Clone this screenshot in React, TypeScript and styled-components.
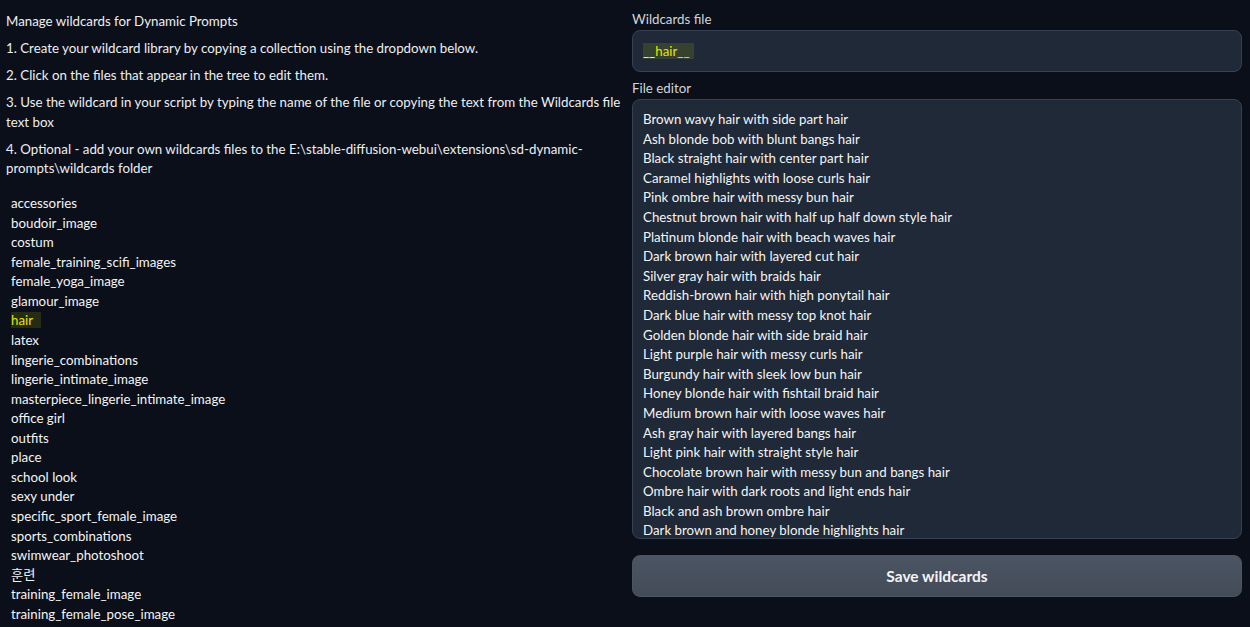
import React from "react";
import styled, { createGlobalStyle } from "styled-components";

const Global = createGlobalStyle`
  html, body { margin: 0; padding: 0; background: #0b0f19; }
  body { font-family: "Lato", "Noto Sans CJK KR", sans-serif; color: #e5e7eb; }
  * { box-sizing: border-box; }
`;

const Page = styled.div`
  display: flex;
  gap: 8px;
  padding: 0 8px 0 6px;
  height: 627px;
  overflow: hidden;
`;

const LeftCol = styled.div`
  flex: 0 0 618px;
  display: flex;
  flex-direction: column;
`;

const RightCol = styled.div`
  flex: 1;
  display: flex;
  flex-direction: column;
  padding-top: 10px;
`;

const Instructions = styled.div`
  padding-top: 12px;
  font-size: 13.3px;
  line-height: 19.5px;
  color: #eceef2;
`;

const Para = styled.p`
  margin: 0 0 7.5px 0;
`;

const Tree = styled.ul`
  list-style: none;
  margin: 8px 0 0 0;
  padding: 0 0 0 5px;
  font-size: 13.3px;
  line-height: 19.57px;
`;

const TreeItem = styled.li`
  color: #f3f4f6;
`;

const Mark = styled.span`
  background: rgba(220, 230, 0, 0.13);
  color: #e3e600;
  padding: 0 8px 0 0;
`;

const Label = styled.div`
  font-size: 13.3px;
  line-height: 18px;
  color: #d1d5db;
  margin-bottom: 2px;
`;

const InputBox = styled.div`
  height: 42px;
  background: #1f2937;
  border: 1px solid #374151;
  border-radius: 8px;
  padding: 0 10px;
  display: flex;
  align-items: center;
  font-size: 13.3px;
  color: #f3f4f6;
  margin-bottom: 7px;
`;

const FileMark = styled.span`
  background: rgba(220, 230, 0, 0.13);
  color: #e3e600;
  padding: 0 4px 0 0;
`;

const WhiteUnd = styled.span`
  color: #f3f4f6;
`;

const Editor = styled.div`
  height: 440px;
  background: #1f2937;
  border: 1px solid #374151;
  border-radius: 8px;
  padding: 10px 10px 0 10px;
  overflow: hidden;
  font-size: 13.3px;
  line-height: 19.6px;
  color: #f3f4f6;
`;

const EditorLine = styled.div`
  white-space: nowrap;
`;

const SaveButton = styled.button`
  margin-top: 16px;
  height: 42px;
  width: 100%;
  background: linear-gradient(to bottom, #4b5563, #434b58);
  border: 1px solid #4b5563;
  border-radius: 8px;
  color: #f3f4f6;
  font-family: "Lato", sans-serif;
  font-weight: 700;
  font-size: 15.5px;
  cursor: pointer;
`;

const treeItems = [
  "accessories",
  "boudoir_image",
  "costum",
  "female_training_scifi_images",
  "female_yoga_image",
  "glamour_image",
  "hair",
  "latex",
  "lingerie_combinations",
  "lingerie_intimate_image",
  "masterpiece_lingerie_intimate_image",
  "office girl",
  "outfits",
  "place",
  "school look",
  "sexy under",
  "specific_sport_female_image",
  "sports_combinations",
  "swimwear_photoshoot",
  "훈련",
  "training_female_image",
  "training_female_pose_image",
];

const lines = [
  "Brown wavy hair with side part hair",
  "Ash blonde bob with blunt bangs hair",
  "Black straight hair with center part hair",
  "Caramel highlights with loose curls hair",
  "Pink ombre hair with messy bun hair",
  "Chestnut brown hair with half up half down style hair",
  "Platinum blonde hair with beach waves hair",
  "Dark brown hair with layered cut hair",
  "Silver gray hair with braids hair",
  "Reddish-brown hair with high ponytail hair",
  "Dark blue hair with messy top knot hair",
  "Golden blonde hair with side braid hair",
  "Light purple hair with messy curls hair",
  "Burgundy hair with sleek low bun hair",
  "Honey blonde hair with fishtail braid hair",
  "Medium brown hair with loose waves hair",
  "Ash gray hair with layered bangs hair",
  "Light pink hair with straight style hair",
  "Chocolate brown hair with messy bun and bangs hair",
  "Ombre hair with dark roots and light ends hair",
  "Black and ash brown ombre hair",
  "Dark brown and honey blonde highlights hair",
];

export default function App() {
  return (
    <>
      <Global />
      <Page>
        <LeftCol>
          <Instructions>
            <Para>Manage wildcards for Dynamic Prompts</Para>
            <Para>1. Create your wildcard library by copying a collection using the dropdown below.</Para>
            <Para>2. Click on the files that appear in the tree to edit them.</Para>
            <Para>
              3. Use the wildcard in your script by typing the name of the file or copying the text from the Wildcards file text box
            </Para>
            <Para>
              4. Optional - add your own wildcards files to the E:\stable-diffusion-webui\extensions\sd-dynamic-prompts\wildcards folder
            </Para>
          </Instructions>
          <Tree>
            {treeItems.map((t) => (
              <TreeItem key={t}>{t === "hair" ? <Mark>{t}</Mark> : t}</TreeItem>
            ))}
          </Tree>
        </LeftCol>
        <RightCol>
          <Label>Wildcards file</Label>
          <InputBox>
            <FileMark>
              <WhiteUnd>__</WhiteUnd>hair__
            </FileMark>
          </InputBox>
          <Label>File editor</Label>
          <Editor>
            {lines.map((l) => (
              <EditorLine key={l}>{l}</EditorLine>
            ))}
          </Editor>
          <SaveButton>Save wildcards</SaveButton>
        </RightCol>
      </Page>
    </>
  );
}
